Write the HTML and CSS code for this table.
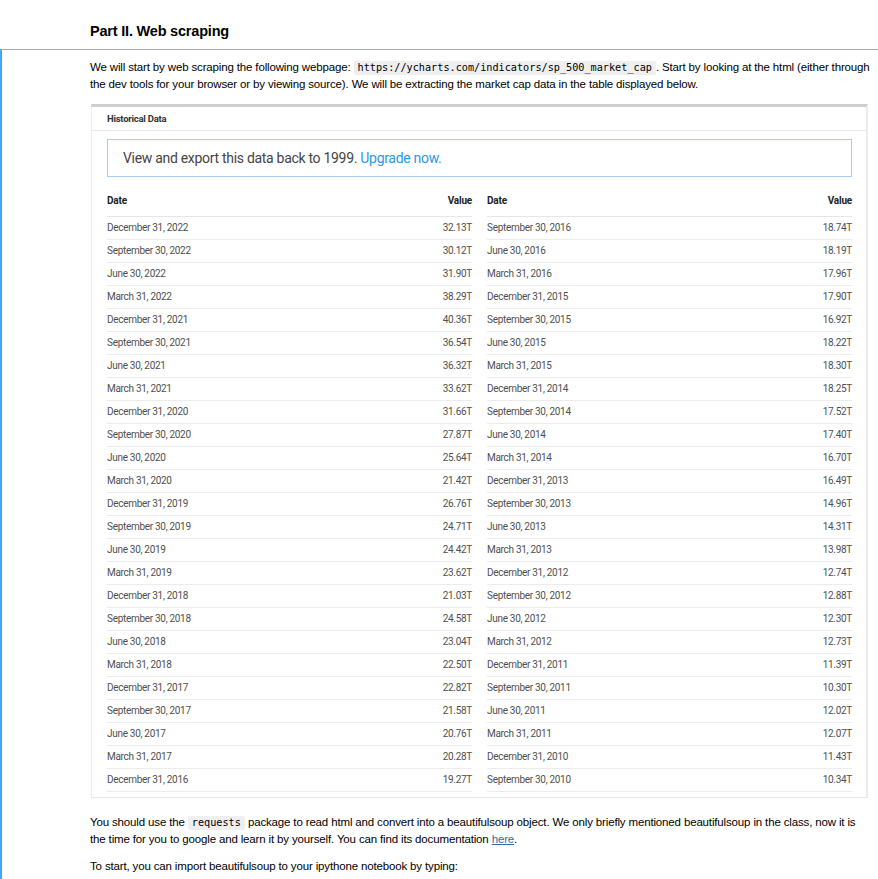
FILE: index.html
```html
<!DOCTYPE html>
<html>
<head>
<meta charset="utf-8">
<link rel="stylesheet" href="styles.css">
</head>
<body>
<div class="title-wrap"><h2 class="title">Part II. Web scraping</h2></div>
<div class="cell">
  <div class="content">
    <p class="para">We will start by web scraping the following webpage: <code>https://ycharts.com/indicators/sp_500_market_cap</code>. Start by looking at the html (either through the dev tools for your browser or by viewing source). We will be extracting the market cap data in the table displayed below.</p>

    <div class="hist">
      <div class="hist-head">Historical Data</div>
      <div class="hist-body">
        <div class="upgrade">View and export this data back to 1999. <span class="up-link">Upgrade now.</span></div>
        <div class="tables">
          <table class="data">
            <thead><tr><th class="d">Date</th><th class="v">Value</th></tr></thead>
            <tbody>
              <tr><td class="d">December 31, 2022</td><td class="v">32.13T</td></tr>
              <tr><td class="d">September 30, 2022</td><td class="v">30.12T</td></tr>
              <tr><td class="d">June 30, 2022</td><td class="v">31.90T</td></tr>
              <tr><td class="d">March 31, 2022</td><td class="v">38.29T</td></tr>
              <tr><td class="d">December 31, 2021</td><td class="v">40.36T</td></tr>
              <tr><td class="d">September 30, 2021</td><td class="v">36.54T</td></tr>
              <tr><td class="d">June 30, 2021</td><td class="v">36.32T</td></tr>
              <tr><td class="d">March 31, 2021</td><td class="v">33.62T</td></tr>
              <tr><td class="d">December 31, 2020</td><td class="v">31.66T</td></tr>
              <tr><td class="d">September 30, 2020</td><td class="v">27.87T</td></tr>
              <tr><td class="d">June 30, 2020</td><td class="v">25.64T</td></tr>
              <tr><td class="d">March 31, 2020</td><td class="v">21.42T</td></tr>
              <tr><td class="d">December 31, 2019</td><td class="v">26.76T</td></tr>
              <tr><td class="d">September 30, 2019</td><td class="v">24.71T</td></tr>
              <tr><td class="d">June 30, 2019</td><td class="v">24.42T</td></tr>
              <tr><td class="d">March 31, 2019</td><td class="v">23.62T</td></tr>
              <tr><td class="d">December 31, 2018</td><td class="v">21.03T</td></tr>
              <tr><td class="d">September 30, 2018</td><td class="v">24.58T</td></tr>
              <tr><td class="d">June 30, 2018</td><td class="v">23.04T</td></tr>
              <tr><td class="d">March 31, 2018</td><td class="v">22.50T</td></tr>
              <tr><td class="d">December 31, 2017</td><td class="v">22.82T</td></tr>
              <tr><td class="d">September 30, 2017</td><td class="v">21.58T</td></tr>
              <tr><td class="d">June 30, 2017</td><td class="v">20.76T</td></tr>
              <tr><td class="d">March 31, 2017</td><td class="v">20.28T</td></tr>
              <tr><td class="d">December 31, 2016</td><td class="v">19.27T</td></tr>
            </tbody>
          </table>
          <table class="data">
            <thead><tr><th class="d">Date</th><th class="v">Value</th></tr></thead>
            <tbody>
              <tr><td class="d">September 30, 2016</td><td class="v">18.74T</td></tr>
              <tr><td class="d">June 30, 2016</td><td class="v">18.19T</td></tr>
              <tr><td class="d">March 31, 2016</td><td class="v">17.96T</td></tr>
              <tr><td class="d">December 31, 2015</td><td class="v">17.90T</td></tr>
              <tr><td class="d">September 30, 2015</td><td class="v">16.92T</td></tr>
              <tr><td class="d">June 30, 2015</td><td class="v">18.22T</td></tr>
              <tr><td class="d">March 31, 2015</td><td class="v">18.30T</td></tr>
              <tr><td class="d">December 31, 2014</td><td class="v">18.25T</td></tr>
              <tr><td class="d">September 30, 2014</td><td class="v">17.52T</td></tr>
              <tr><td class="d">June 30, 2014</td><td class="v">17.40T</td></tr>
              <tr><td class="d">March 31, 2014</td><td class="v">16.70T</td></tr>
              <tr><td class="d">December 31, 2013</td><td class="v">16.49T</td></tr>
              <tr><td class="d">September 30, 2013</td><td class="v">14.96T</td></tr>
              <tr><td class="d">June 30, 2013</td><td class="v">14.31T</td></tr>
              <tr><td class="d">March 31, 2013</td><td class="v">13.98T</td></tr>
              <tr><td class="d">December 31, 2012</td><td class="v">12.74T</td></tr>
              <tr><td class="d">September 30, 2012</td><td class="v">12.88T</td></tr>
              <tr><td class="d">June 30, 2012</td><td class="v">12.30T</td></tr>
              <tr><td class="d">March 31, 2012</td><td class="v">12.73T</td></tr>
              <tr><td class="d">December 31, 2011</td><td class="v">11.39T</td></tr>
              <tr><td class="d">September 30, 2011</td><td class="v">10.30T</td></tr>
              <tr><td class="d">June 30, 2011</td><td class="v">12.02T</td></tr>
              <tr><td class="d">March 31, 2011</td><td class="v">12.07T</td></tr>
              <tr><td class="d">December 31, 2010</td><td class="v">11.43T</td></tr>
              <tr><td class="d">September 30, 2010</td><td class="v">10.34T</td></tr>
            </tbody>
          </table>
        </div>
      </div>
    </div>

    <p class="para para-2">You should use the <code>requests</code> package to read html and convert into a beautifulsoup object. We only briefly mentioned beautifulsoup in the class, now it is the time for you to google and learn it by yourself. You can find its documentation <a class="link" href="#">here</a>.</p>
    <p class="para para-3">To start, you can import beautifulsoup to your ipythone notebook by typing:</p>
  </div>
</div>
</body>
</html>
```

FILE: styles.css
```css
html, body {
  margin: 0;
  padding: 0;
  background: #ffffff;
}

body {
  font-family: "Liberation Sans", Arial, sans-serif;
  color: #000000;
  overflow: hidden;
  height: 879px;
}

.title-wrap {
  padding: 22px 0 9px 90px;
}

.title {
  margin: 0;
  font-size: 14.5px;
  line-height: 18px;
  font-weight: bold;
  letter-spacing: -0.2px;
  color: #000000;
}

.cell {
  border-top: 1px solid #ababab;
  min-height: 860px;
  border-left: 2px solid #42a5f5;
}

.content {
  padding: 8.5px 0 0 88px;
  width: 781px;
}

.para {
  margin: 0;
  font-size: 11.5px;
  line-height: 17px;
  letter-spacing: -0.15px;
}

.para-2 {
  margin-top: 15.5px;
}

.para-3 {
  margin-top: 10px;
}

code {
  font-family: "DejaVu Sans Mono", monospace;
  font-size: 10.2px;
  letter-spacing: 0;
  background: #efefef;
  padding: 1px 4px 2px;
  border-radius: 2px;
}

.link {
  color: #296eaa;
  text-decoration: underline;
}

/* Historical data panel */
.hist {
  margin: 11.5px 0 0 1px;
  width: 777px;
  box-sizing: border-box;
  border-top: 3px solid #cdcdcd;
  border-left: 1px solid #ececec;
  border-right: 2px solid #ececec;
  border-bottom: 1px solid #e6e6e6;
  font-family: Roboto, "Liberation Sans", sans-serif;
}

.hist-head {
  height: 23px;
  line-height: 23px;
  padding: 0 15px;
  border-bottom: 1px solid #e8e8e8;
  font-size: 9.5px;
  font-weight: bold;
  letter-spacing: -0.25px;
  color: #333333;
}

.hist-body {
  padding: 8px 14px 5px 15px;
}

.upgrade {
  height: 36px;
  line-height: 36px;
  border: 1px solid #a9cdf0;
  padding: 0 15px;
  font-size: 14px;
  letter-spacing: -0.3px;
  color: #444444;
}

.up-link {
  color: #2e96e8;
}

.tables {
  display: flex;
  gap: 15px;
  margin-top: 13px;
}

.data {
  flex: 1;
  border-collapse: collapse;
  font-size: 10px;
  letter-spacing: -0.3px;
  color: #4f4f4f;
}

.data th {
  height: 22px;
  line-height: 22px;
  padding: 0 0 4px;
  font-weight: bold;
  color: #222222;
  letter-spacing: -0.2px;
  border-bottom: 1px solid #e6e6e6;
}

.data td {
  height: 22px;
  line-height: 22px;
  padding: 0;
  border-bottom: 1px solid #ececec;
}

.data .d {
  text-align: left;
}

.data .v {
  text-align: right;
}
```
